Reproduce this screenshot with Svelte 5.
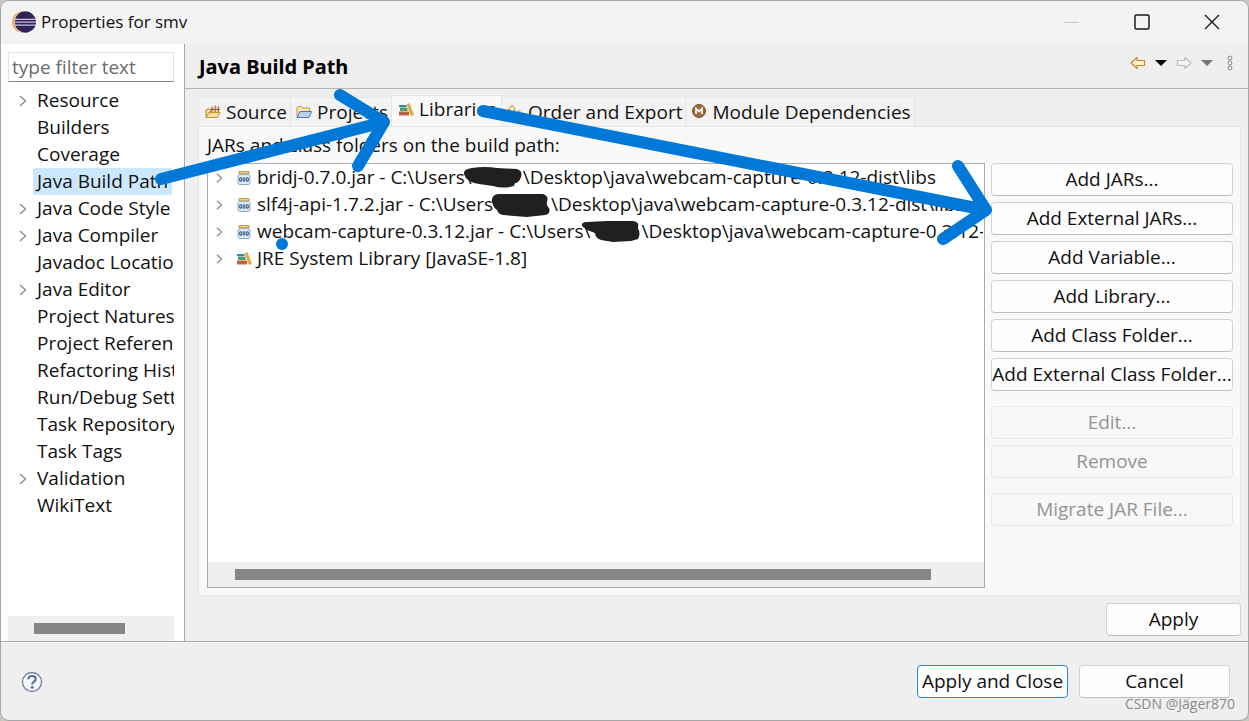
<script lang="ts">
    type TreeItem = { label: string; expandable?: boolean };
    type Jar = { name: string; icon: "jar" | "books"; path?: string; scribble?: string };

    const pages: TreeItem[] = [
        { label: "Resource", expandable: true },
        { label: "Builders" },
        { label: "Coverage" },
        { label: "Java Build Path" },
        { label: "Java Code Style", expandable: true },
        { label: "Java Compiler", expandable: true },
        { label: "Javadoc Location" },
        { label: "Java Editor", expandable: true },
        { label: "Project Natures" },
        { label: "Project References" },
        { label: "Refactoring History" },
        { label: "Run/Debug Settings" },
        { label: "Task Repository" },
        { label: "Task Tags" },
        { label: "Validation", expandable: true },
        { label: "WikiText" },
    ];

    const tabs = [
        { label: "Source", icon: "package" },
        { label: "Projects", icon: "folder" },
        { label: "Libraries", icon: "books" },
        { label: "Order and Export", icon: "order" },
        { label: "Module Dependencies", icon: "module" },
    ];

    const jars: Jar[] = [
        {
            name: "bridj-0.7.0.jar - C:\\Users\\",
            icon: "jar",
            path: "\\Desktop\\java\\webcam-capture-0.3.12-dist\\libs",
            scribble: "M1 8Q0 3 9 2Q22 0 34 2L54 3Q60 5 58 11Q56 17 52 17L51 20Q40 23 30 20L16 18Q3 16 1 8Z",
        },
        {
            name: "slf4j-api-1.7.2.jar - C:\\Users\\",
            icon: "jar",
            path: "\\Desktop\\java\\webcam-capture-0.3.12-dist\\libs",
            scribble: "M1 9Q0 2 7 1L52 1Q58 3 56 9Q55 12 58 15Q60 21 54 22L36 24L12 22Q7 21 6 17Q2 14 1 9Z",
        },
        {
            name: "webcam-capture-0.3.12.jar - C:\\Users\\",
            icon: "jar",
            path: "\\Desktop\\java\\webcam-capture-0.3.12-dist",
            scribble: "M1 6Q0 2 6 2L26 1L52 1Q59 2 57 8Q60 14 57 19L50 21L32 22L20 20Q14 18 14 13L6 10Z",
        },
        { name: "JRE System Library [JavaSE-1.8]", icon: "books" },
    ];

    const actionGroups = [
        { disabled: false, items: ["Add JARs...", "Add External JARs...", "Add Variable...", "Add Library...", "Add Class Folder...", "Add External Class Folder..."] },
        { disabled: true, items: ["Edit...", "Remove"] },
        { disabled: true, items: ["Migrate JAR File..."] },
    ];

    let filter = $state("");
    let selectedPage = $state("Java Build Path");
    let selectedTab = $state("Libraries");
</script>

{#snippet chevron()}
    <svg class="chevron" viewBox="0 0 10 14" aria-hidden="true">
        <path d="M2 2 L7.5 7 L2 12" fill="none" stroke="#8c8c8c" stroke-width="1.4" />
    </svg>
{/snippet}

{#snippet icon(name: string)}
    <svg class="icon" viewBox="0 0 16 16" aria-hidden="true">
        {#if name === "package"}
            <path d="M1 13.5V6L2 5H5.5V8.5H4Z" fill="#f4d9a0" stroke="#b98a3c" />
            <path d="M6 2.5H14.5V9H6Z" fill="#f0d3ae" />
            <path d="M7 2.5V9M10.2 1.5V9M13.4 2.5V9M5.5 5.5H15" stroke="#85583a" stroke-width=".9" />
            <path d="M1 13.5L4 8.5H15L12.5 13.5Z" fill="#fbdf9c" stroke="#c0913f" stroke-linejoin="round" />
        {:else if name === "folder"}
            <path d="M1 13.5V3.5L2 2.5H5.5L6.5 4H13.5V7" fill="#f6e5b5" stroke="#be963f" />
            <path d="M1 13.5L4 7.5H15.5L13 13.5Z" fill="#b9d1f5" stroke="#5673b5" stroke-linejoin="round" />
        {:else if name === "books"}
            <path d="M1 3H8.5V5H1Z" fill="#3a86a8" />
            <path d="M2 5.5H9.5V9H2Z" fill="#4c9b73" />
            <path d="M1 9.5H11V13.5H1Z" fill="#c46b47" />
            <path d="M1 11.3H11" stroke="#a14e30" stroke-width=".8" />
            <path d="M9 2.3L11.3 1.6L15.5 12.8L13 13.6Z" fill="#eea93b" stroke="#d08f2c" stroke-width=".5" />
        {:else if name === "order"}
            <path d="M3.5 13V6H1L5 1L8.5 6H6.5V13Z" fill="#fff4c4" stroke="#bd9230" />
            <path d="M10.5 7V11H8.5L12 14.5L15.5 11H13V7Z" fill="#fff4c4" stroke="#bd9230" />
        {:else if name === "module"}
            <circle cx="8" cy="7" r="6.5" fill="#9a6a3c" stroke="#7b4f27" />
            <path d="M5 10V4.5L8 7.5L11 4.5V10" fill="none" stroke="#fff" stroke-width="1.6" />
        {:else}
            <path d="M3 1.5H13V4H3Z" fill="#f3d173" stroke="#b58d35" stroke-width=".8" />
            <path d="M3.5 4.3H12.5L14 6V13L12.8 14.5H3.2L2 13V6Z" fill="#dbe8f5" stroke="#7f9cbd" stroke-width=".9" />
            <ellipse cx="4.8" cy="9.5" rx="1.2" ry="1.7" fill="none" stroke="#294b80" stroke-width="1.1" />
            <path d="M8 7.2V11.8" stroke="#294b80" stroke-width="1.3" />
            <ellipse cx="11.2" cy="9.5" rx="1.2" ry="1.7" fill="none" stroke="#294b80" stroke-width="1.1" />
        {/if}
    </svg>
{/snippet}

<div class="dialog">
    <header class="titlebar">
        <svg class="logo" viewBox="0 0 24 22" aria-hidden="true">
            <circle cx="11" cy="11" r="10.8" fill="#f7a23b" />
            <circle cx="13" cy="11" r="11" fill="#fff" />
            <circle cx="13.3" cy="11" r="10.7" fill="#2f2357" />
            <path d="M3 8.3H23.7M2.6 11.2H24M3 14.1H23.7" stroke="#c9c3e0" stroke-width="1.3" />
        </svg>
        <h1>Properties for smv</h1>
        <div class="controls">
            <button aria-label="Minimize" disabled>
                <svg viewBox="0 0 16 16"><path d="M0 8.5H15" stroke="#c9c9c9" /></svg>
            </button>
            <button aria-label="Maximize">
                <svg viewBox="0 0 16 16"><rect x="1" y="1" width="14" height="14" rx="1.2" fill="none" stroke="#1a1a1a" stroke-width="1.5" /></svg>
            </button>
            <button aria-label="Close">
                <svg viewBox="0 0 16 16"><path d="M1 1L15 15M15 1L1 15" stroke="#1a1a1a" stroke-width="1.4" /></svg>
            </button>
        </div>
    </header>

    <div class="body">
        <aside>
            <input class="filter" type="text" placeholder="type filter text" aria-label="Filter pages" bind:value={filter} />
            <ul class="tree">
                {#each pages as page}
                    <li>
                        <span class="twisty">{#if page.expandable}{@render chevron()}{/if}</span>
                        <button class:selected={page.label === selectedPage} onclick={() => (selectedPage = page.label)}>{page.label}</button>
                    </li>
                {/each}
            </ul>
            <div class="scrollbar"><div class="thumb"></div></div>
        </aside>

        <main>
            <div class="heading">
                <h2>Java Build Path</h2>
                <nav>
                    <button aria-label="Back">
                        <svg width="16" height="14" viewBox="0 0 16 14"><path d="M1 7L7 1.5V4.5H14.5V9.5H7V12.5Z" fill="#fff3c9" stroke="#c5862b" stroke-width="1.2" stroke-linejoin="round" /></svg>
                    </button>
                    <button aria-label="Back history">
                        <svg width="12" height="14" viewBox="0 0 12 14"><path d="M0 4H12L6 10Z" fill="#000" /></svg>
                    </button>
                    <button aria-label="Forward">
                        <svg width="16" height="14" viewBox="0 0 16 14"><path d="M15 7L9 1.5V4.5H1.5V9.5H9V12.5Z" fill="#f5f5f5" stroke="#bababa" stroke-width="1.2" stroke-linejoin="round" /></svg>
                    </button>
                    <button aria-label="Forward history">
                        <svg width="12" height="14" viewBox="0 0 12 14"><path d="M0 4H12L6 10Z" fill="#777" /></svg>
                    </button>
                    <button aria-label="View menu">
                        <svg width="16" height="16" viewBox="0 0 16 16">
                            <g fill="#fff" stroke="#808080"><circle cx="8" cy="3" r="1.9" /><circle cx="8" cy="8" r="1.9" /><circle cx="8" cy="13" r="1.9" /></g>
                        </svg>
                    </button>
                </nav>
            </div>

            <div class="content">
                <div class="tabs" role="tablist">
                    {#each tabs as tab}
                        <button role="tab" class:active={tab.label === selectedTab} aria-selected={tab.label === selectedTab} onclick={() => (selectedTab = tab.label)}>
                            {@render icon(tab.icon)}
                            {tab.label}
                        </button>
                    {/each}
                </div>

                <section class="panel">
                    <p>JARs and class folders on the build path:</p>
                    <div class="columns">
                        <div class="list">
                            <ul>
                                {#each jars as jar}
                                    <li>
                                        {@render chevron()}
                                        {@render icon(jar.icon)}
                                        <span>{jar.name}</span>
                                        {#if jar.path}
                                            <svg class="redacted" viewBox="0 0 60 24" aria-hidden="true">
                                                <path d={jar.scribble} fill="#202020" />
                                            </svg>
                                            <span>{jar.path}</span>
                                        {/if}
                                    </li>
                                {/each}
                            </ul>
                            <div class="scrollbar"><div class="thumb"></div></div>
                        </div>
                        <div class="actions">
                            {#each actionGroups as group}
                                <div class="group">
                                    {#each group.items as item}
                                        <button class="push" disabled={group.disabled}>{item}</button>
                                    {/each}
                                </div>
                            {/each}
                        </div>
                    </div>
                </section>

                <div class="apply-row">
                    <button class="push">Apply</button>
                </div>
            </div>
        </main>
    </div>

    <footer>
        <button class="help" aria-label="Help">
            <svg viewBox="0 0 22 22">
                <circle cx="11" cy="11" r="9.5" fill="#f4f6fa" stroke="#7384a3" stroke-width="1.3" />
                <path d="M7.3 8.3Q7.5 5 11 5Q14.7 5 14.7 8.1Q14.7 9.8 12.7 11Q11.2 12 11.2 13.5" fill="none" stroke="#536b96" stroke-width="2.1" />
                <circle cx="11.2" cy="16.3" r="1.4" fill="#536b96" />
            </svg>
        </button>
        <button class="push default">Apply and Close</button>
        <button class="push">Cancel</button>
        <span class="watermark">CSDN @Jäger870</span>
    </footer>

    <!-- hand-drawn arrows laid over the dialog -->
    <svg class="ink" width="1249" height="721" viewBox="0 0 1249 721" aria-hidden="true">
        <g fill="none" stroke="#0078d7" stroke-width="12" stroke-linecap="round" stroke-linejoin="round">
            <path d="M161 179L384 122M340 95L384 122L358 166" />
            <path d="M483 111L986 210M958 166L986 210L943 239" />
        </g>
        <circle cx="282" cy="244" r="6" fill="#0078d7" />
    </svg>
</div>

<style>
    :global(body) {
        margin: 0;
        background: #c4c8bf;
        font-family: "Open Sans", "Noto Sans", sans-serif;
        font-size: 19px;
        line-height: 27px;
        color: #111;
    }

    .dialog {
        position: relative;
        display: flex;
        flex-direction: column;
        box-sizing: border-box;
        min-height: 100vh;
        border: 1px solid #a6a6a6;
        border-radius: 9px;
        background: #efefef;
        overflow: hidden;
    }

    button {
        padding: 0;
        border: none;
        background: none;
        color: inherit;
        font: inherit;
    }

    ul {
        margin: 0;
        padding: 0;
        list-style: none;
    }

    svg {
        flex: none;
    }

    .titlebar {
        display: flex;
        align-items: center;
        gap: 5px;
        box-sizing: border-box;
        height: 43px;
        padding: 0 1px 2px 11px;
        background: #f3f3f3;
    }

    .logo {
        width: 24px;
        height: 22px;
    }

    h1 {
        flex: 1;
        margin: 0;
        font-size: 17px;
        font-weight: 400;
    }

    .controls {
        display: flex;
    }

    .controls button {
        display: grid;
        place-items: center;
        width: 70px;
        height: 41px;
    }

    .controls svg {
        width: 16px;
        height: 16px;
    }

    .body {
        display: flex;
        flex: 1;
        border-bottom: 1px solid #a8a8a8;
    }

    aside {
        display: flex;
        flex: none;
        flex-direction: column;
        box-sizing: border-box;
        width: 184px;
        padding: 8px 10px 0 7px;
        border-right: 1px solid #a8a8a8;
        background: #fff;
    }

    .filter {
        box-sizing: border-box;
        width: 100%;
        height: 30px;
        margin-bottom: 5px;
        padding: 0 3px;
        border: 1px solid #e3e3e3;
        border-bottom-color: #868686;
        font: inherit;
    }

    .filter::placeholder {
        color: #6d6d6d;
        opacity: 1;
    }

    .tree {
        flex: 1;
        overflow: hidden;
    }

    .tree li {
        display: flex;
        height: 27px;
        white-space: nowrap;
    }

    .twisty {
        display: flex;
        flex: none;
        align-items: center;
        justify-content: center;
        box-sizing: border-box;
        width: 25px;
        padding-left: 5px;
    }

    .tree button {
        padding: 0 4px;
        border-radius: 2px;
    }

    .tree .selected {
        background: #cce8ff;
    }

    .chevron {
        width: 10px;
        height: 14px;
    }

    .scrollbar {
        display: flex;
        align-items: center;
        height: 25px;
        padding: 0 26px;
        background: #efefef;
    }

    .thumb {
        width: 100%;
        height: 11px;
        background: #868686;
    }

    aside .thumb {
        width: 91px;
    }

    main {
        display: flex;
        flex: 1;
        flex-direction: column;
        min-width: 0;
    }

    .heading {
        display: flex;
        align-items: center;
        justify-content: space-between;
        height: 44px;
        padding: 0 10px 0 14px;
        border-bottom: 1px solid #b4b4b4;
    }

    h2 {
        margin: 0;
        font-family: "Noto Sans", sans-serif;
        font-size: 20px;
        font-weight: 700;
        color: #000;
    }

    nav {
        display: flex;
        align-items: center;
        gap: 9px;
        padding-bottom: 7px;
    }

    nav svg {
        display: block;
    }

    .content {
        display: flex;
        flex: 1;
        flex-direction: column;
        padding: 6px 7px 5px 13px;
    }

    .tabs {
        display: flex;
        align-items: flex-end;
        padding-left: 2px;
    }

    .tabs button {
        display: flex;
        align-items: center;
        gap: 5px;
        box-sizing: border-box;
        height: 29px;
        padding: 0 3px 0 5px;
        border: 1px solid #e6e6e6;
        border-width: 1px 1px 0 0;
        background: #f3f3f3;
        white-space: nowrap;
    }

    .tabs .active {
        height: 31px;
        padding: 0 5px 3px 6px;
        background: #f9f9f9;
    }

    .icon {
        width: 16px;
        height: 16px;
    }

    .panel {
        display: flex;
        flex: 1;
        flex-direction: column;
        padding: 5px 7px 7px 8px;
        border: 1px solid #e6e6e6;
        background: #f9f9f9;
    }

    .panel p {
        margin: 0 0 4px;
    }

    .columns {
        display: flex;
        flex: 1;
        gap: 6px;
    }

    .list {
        display: flex;
        flex: 1;
        flex-direction: column;
        min-width: 0;
        border: 1px solid #a9abb3;
        background: #fff;
    }

    .list ul {
        flex: 1;
        margin-right: 1px;
        overflow: hidden;
    }

    .list li {
        display: flex;
        align-items: center;
        padding-left: 7px;
        white-space: nowrap;
    }

    .list .chevron {
        width: 9px;
        height: 12px;
    }

    .list .icon {
        margin: 0 5px 0 12px;
    }

    .redacted {
        width: 60px;
        height: 24px;
        margin-left: -9px;
    }

    .list .scrollbar {
        padding: 0 53px 0 27px;
    }

    .actions {
        display: flex;
        flex: none;
        flex-direction: column;
        gap: 15px;
        width: 242px;
    }

    .group {
        display: flex;
        flex-direction: column;
        gap: 6px;
    }

    .push {
        box-sizing: border-box;
        height: 33px;
        border: 1px solid #d2d2d2;
        border-bottom-color: #bdbdbd;
        border-radius: 4px;
        background: #fdfdfd;
        white-space: nowrap;
    }

    .push:disabled {
        border-color: #e8e8e8;
        background: #f8f8f8;
        color: #949494;
    }

    .apply-row {
        display: flex;
        justify-content: flex-end;
        padding-top: 7px;
    }

    .apply-row .push {
        width: 135px;
    }

    footer {
        position: relative;
        display: flex;
        align-items: center;
        gap: 11px;
        height: 77px;
        padding: 0 18px 0 20px;
        border-top: 1px solid #fafafa;
    }

    .help {
        margin-right: auto;
    }

    .help svg {
        display: block;
        width: 22px;
        height: 22px;
    }

    footer .push {
        width: 151px;
    }

    footer .default {
        border-color: #2f86d0;
    }

    .watermark {
        position: absolute;
        right: 13px;
        bottom: 7px;
        font-size: 14px;
        line-height: 18px;
        color: #8b8b8b;
    }

    .ink {
        position: absolute;
        top: -1px;
        left: -1px;
        pointer-events: none;
    }
</style>
